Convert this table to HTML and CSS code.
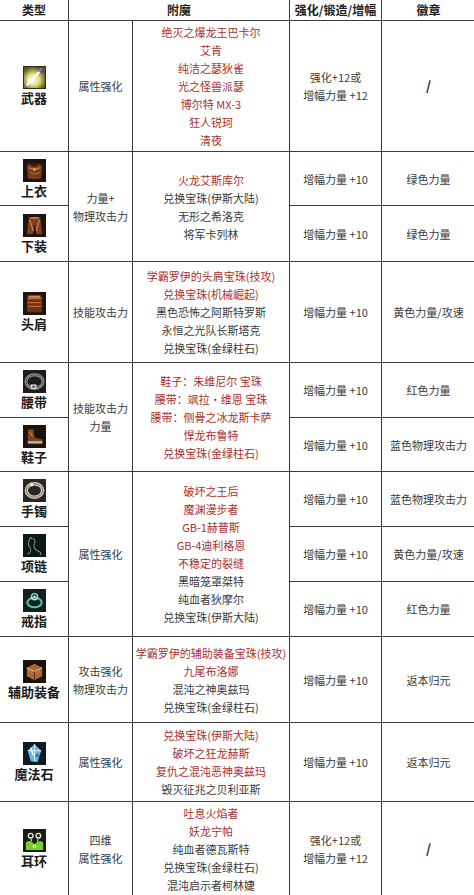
FILE: index.html
```html
<!DOCTYPE html>
<html lang="zh-CN">
<head>
<meta charset="utf-8">
<title>装备附魔表</title>
<link rel="stylesheet" href="styles.css">
</head>
<body>
<table class="gear">
  <colgroup>
    <col class="c1"><col class="c2"><col class="c3"><col class="c4"><col class="c5">
  </colgroup>
  <thead>
    <tr class="h-head">
      <th>类型</th>
      <th colspan="2">附魔</th>
      <th>强化/锻造/增幅</th>
      <th>徽章</th>
    </tr>
  </thead>
  <tbody>
    <tr class="h-weapon">
      <td><div class="type">
        <svg class="icon" viewBox="0 0 24 24"><defs><radialGradient id="gw" cx="0.45" cy="0.6" r="0.6"><stop offset="0" stop-color="#fffbe0"/><stop offset="0.45" stop-color="#e9e08a"/><stop offset="1" stop-color="#5b5a1e"/></radialGradient></defs><rect width="24" height="24" fill="#2b2a14"/><rect x="1" y="1" width="22" height="22" fill="url(#gw)"/><path d="M4 20 L18 5" stroke="#fff" stroke-width="2.2"/><path d="M15 4 L21 2 L19 8 Z" fill="#7a4aa8"/><path d="M16 6 L19 3" stroke="#b58de0" stroke-width="1.2"/><circle cx="8" cy="15" r="3" fill="#fffef2" opacity="0.8"/></svg>
        <span class="label">武器</span></div></td>
      <td>属性强化</td>
      <td class="list">
        <div class="r">绝灭之爆龙王巴卡尔</div>
        <div class="r">艾肯</div>
        <div class="r">纯洁之瑟狄雀</div>
        <div class="r">光之怪兽派瑟</div>
        <div class="r">博尔特 MX-3</div>
        <div class="r">狂人锐珂</div>
        <div class="r">清夜</div>
      </td>
      <td>强化+12或<br>增幅力量 +12</td>
      <td class="slash">/</td>
    </tr>
    <tr class="h-top">
      <td><div class="type">
        <svg class="icon" viewBox="0 0 24 24"><rect width="24" height="24" fill="#1e140d"/><path d="M4 7 Q8 3 12 6 Q16 3 20 7 L19 20 Q12 22 5 20 Z" fill="#7a3d1f"/><path d="M6 9 Q12 12 18 9" stroke="#c07040" stroke-width="1.5" fill="none"/><path d="M7 14 Q12 17 17 14" stroke="#a85a30" stroke-width="1.5" fill="none"/><path d="M8 5 Q12 9 16 5" stroke="#2a1408" stroke-width="1.6" fill="none"/><circle cx="12" cy="11" r="1.5" fill="#e09a60"/></svg>
        <span class="label">上衣</span></div></td>
      <td rowspan="2">力量+<br>物理攻击力</td>
      <td rowspan="2" class="list">
        <div class="r">火龙艾斯库尔</div>
        <div>兑换宝珠(伊斯大陆)</div>
        <div>无形之希洛克</div>
        <div>将军卡列林</div>
      </td>
      <td>增幅力量 +10</td>
      <td>绿色力量</td>
    </tr>
    <tr class="h-bottom">
      <td><div class="type">
        <svg class="icon" viewBox="0 0 24 24"><rect width="24" height="24" fill="#1e140d"/><path d="M6 3 L18 3 L20 21 L14 21 L12 10 L10 21 L4 21 Z" fill="#7f3f1e"/><path d="M7 6 L11 18 M17 6 L14 18" stroke="#c27a45" stroke-width="1.4"/><path d="M8 4 L16 4" stroke="#e0a070" stroke-width="1.2"/></svg>
        <span class="label">下装</span></div></td>
      <td>增幅力量 +10</td>
      <td>绿色力量</td>
    </tr>
    <tr class="h-shoulder">
      <td><div class="type">
        <svg class="icon" viewBox="0 0 24 24"><rect width="24" height="24" fill="#20140c"/><rect x="4" y="3" width="16" height="18" rx="2" fill="#6b3418"/><path d="M5 7 H19 M5 11 H19 M5 15 H19" stroke="#b86a3a" stroke-width="1.3"/><rect x="6" y="4" width="12" height="2" fill="#d68a50"/></svg>
        <span class="label">头肩</span></div></td>
      <td>技能攻击力</td>
      <td class="list">
        <div class="r">学霸罗伊的头肩宝珠(技攻)</div>
        <div class="r">兑换宝珠(机械崛起)</div>
        <div>黑色恐怖之阿斯特罗斯</div>
        <div>永恒之光队长斯塔克</div>
        <div>兑换宝珠(金绿柱石)</div>
      </td>
      <td>增幅力量 +10</td>
      <td>黄色力量/攻速</td>
    </tr>
    <tr class="h-belt">
      <td><div class="type">
        <svg class="icon" viewBox="0 0 24 24"><rect width="24" height="24" fill="#1c1c1c"/><ellipse cx="12" cy="12" rx="9" ry="7" fill="none" stroke="#9a9692" stroke-width="3"/><ellipse cx="12" cy="12" rx="9" ry="7" fill="none" stroke="#4a4644" stroke-width="1"/><rect x="8" y="15" width="6" height="5" fill="#d8d4cc"/><rect x="9.5" y="16.5" width="3" height="2" fill="#555"/></svg>
        <span class="label">腰带</span></div></td>
      <td rowspan="2">技能攻击力<br>力量</td>
      <td rowspan="2" class="list">
        <div class="r">鞋子：朱维尼尔 宝珠</div>
        <div class="r">腰带：飒拉·维恩 宝珠</div>
        <div class="r">腰带：侧骨之冰龙斯卡萨</div>
        <div class="r">悍龙布鲁特</div>
        <div class="r">兑换宝珠(金绿柱石)</div>
      </td>
      <td>增幅力量 +10</td>
      <td>红色力量</td>
    </tr>
    <tr class="h-shoes">
      <td><div class="type">
        <svg class="icon" viewBox="0 0 24 24"><rect width="24" height="24" fill="#1a120c"/><path d="M5 5 L11 4 L12 13 L20 15 Q22 18 19 20 L5 20 Z" fill="#7d4526"/><path d="M5 18 L20 18" stroke="#c8c0b8" stroke-width="2"/><path d="M7 7 L10 12" stroke="#b87a4c" stroke-width="1.5"/></svg>
        <span class="label">鞋子</span></div></td>
      <td>增幅力量 +10</td>
      <td>蓝色物理攻击力</td>
    </tr>
    <tr class="h-bracelet">
      <td><div class="type">
        <svg class="icon" viewBox="0 0 24 24"><rect width="24" height="24" fill="#2a2623"/><ellipse cx="12" cy="12" rx="8.5" ry="7" fill="none" stroke="#d8d2c8" stroke-width="3.5"/><ellipse cx="12" cy="12" rx="8.5" ry="7" fill="none" stroke="#6a625a" stroke-width="1"/><circle cx="9" cy="6" r="1.6" fill="#fff"/></svg>
        <span class="label">手镯</span></div></td>
      <td rowspan="3">属性强化</td>
      <td rowspan="3" class="list">
        <div class="r">破坏之王后</div>
        <div class="r">魔渊漫步者</div>
        <div class="r">GB-1赫普斯</div>
        <div class="r">GB-4迪利格恩</div>
        <div class="r">不稳定的裂缝</div>
        <div>黑暗笼罩桀特</div>
        <div>纯血者狄摩尔</div>
        <div>兑换宝珠(伊斯大陆)</div>
      </td>
      <td>增幅力量 +10</td>
      <td>蓝色物理攻击力</td>
    </tr>
    <tr class="h-necklace">
      <td><div class="type">
        <svg class="icon" viewBox="0 0 24 24"><rect width="24" height="24" fill="#101614"/><path d="M8 4 Q4 10 7 14 Q10 18 5 21 M8 4 Q14 5 12 10 Q10 15 16 18 Q20 20 18 22" stroke="#8fd0c0" stroke-width="1.1" fill="none" stroke-dasharray="1.2 0.6"/></svg>
        <span class="label">项链</span></div></td>
      <td>增幅力量 +10</td>
      <td>黄色力量/攻速</td>
    </tr>
    <tr class="h-ring">
      <td><div class="type">
        <svg class="icon" viewBox="0 0 24 24"><rect width="24" height="24" fill="#12201e"/><ellipse cx="12" cy="14" rx="7.5" ry="5" fill="none" stroke="#5fb8a8" stroke-width="2.2"/><circle cx="12" cy="8" r="3.2" fill="none" stroke="#9ee0d0" stroke-width="1.5"/><circle cx="12" cy="8" r="1.2" fill="#d8fff4"/></svg>
        <span class="label">戒指</span></div></td>
      <td>增幅力量 +10</td>
      <td>红色力量</td>
    </tr>
    <tr class="h-aux">
      <td><div class="type">
        <svg class="icon" viewBox="0 0 24 24"><rect width="24" height="24" fill="#1b120b"/><path d="M4 8 L12 4 L20 8 L20 17 L12 21 L4 17 Z" fill="#a8663a"/><path d="M4 8 L12 12 L20 8" stroke="#e2a56e" stroke-width="1.2" fill="none"/><path d="M12 12 L12 21" stroke="#5e3418" stroke-width="1.2"/><path d="M6 10 L10 15 M14 15 L18 10" stroke="#c98450" stroke-width="1"/></svg>
        <span class="label">辅助装备</span></div></td>
      <td>攻击强化<br>物理攻击力</td>
      <td class="list">
        <div class="r">学霸罗伊的辅助装备宝珠(技攻)</div>
        <div class="r">九尾布洛娜</div>
        <div>混沌之神奥兹玛</div>
        <div>兑换宝珠(金绿柱石)</div>
      </td>
      <td>增幅力量 +10</td>
      <td>返本归元</td>
    </tr>
    <tr class="h-magic">
      <td><div class="type">
        <svg class="icon" viewBox="0 0 24 24"><rect width="24" height="24" fill="#141a22"/><path d="M12 2 L19 9 L15 21 L8 20 L5 9 Z" fill="#6fb6e6"/><path d="M12 2 L12 20 M5 9 L19 9" stroke="#d8f2ff" stroke-width="1"/><path d="M8 6 L11 14" stroke="#ffffff" stroke-width="1.4"/><circle cx="15" cy="14" r="2" fill="#2f7fb8"/></svg>
        <span class="label">魔法石</span></div></td>
      <td>属性强化</td>
      <td class="list">
        <div class="r">兑换宝珠(伊斯大陆)</div>
        <div class="r">破坏之狂龙赫斯</div>
        <div class="r">复仇之混沌恶神奥兹玛</div>
        <div>毁灭征兆之贝利亚斯</div>
      </td>
      <td>增幅力量 +10</td>
      <td>返本归元</td>
    </tr>
    <tr class="h-ear">
      <td><div class="type">
        <svg class="icon" viewBox="0 0 24 24"><rect width="24" height="24" fill="#172010"/><path d="M3 14 Q7 10 12 16 Q17 10 21 14 L21 22 L3 22 Z" fill="#7ccf2a"/><circle cx="8" cy="7" r="2.4" fill="none" stroke="#e8e8e0" stroke-width="1.4"/><circle cx="16" cy="7" r="2.4" fill="none" stroke="#e8e8e0" stroke-width="1.4"/><path d="M8 9.5 L9 13 M16 9.5 L15 13" stroke="#d0d0c8" stroke-width="1.2"/><circle cx="12" cy="18" r="2" fill="#b4f060"/></svg>
        <span class="label">耳环</span></div></td>
      <td>四维<br>属性强化</td>
      <td class="list">
        <div class="r">吐息火焰者</div>
        <div class="r">妖龙宁帕</div>
        <div>纯血者德瓦斯特</div>
        <div>兑换宝珠(金绿柱石)</div>
        <div>混沌启示者柯林婕</div>
      </td>
      <td>强化+12或<br>增幅力量 +12</td>
      <td class="slash">/</td>
    </tr>
  </tbody>
</table>
</body>
</html>
```
FILE: styles.css
```css
html, body {
  margin: 0;
  padding: 0;
  background: #ffffff;
}
body {
  width: 474px;
  height: 895px;
  overflow: hidden;
  font-family: "Noto Sans CJK SC", "Microsoft YaHei", sans-serif;
}
.gear {
  border-collapse: collapse;
  table-layout: fixed;
  width: 476px;
  margin: -1px 0 0 -1px;
}
.c1 { width: 69px; }
.c2 { width: 64px; }
.c3 { width: 157px; }
.c4 { width: 92px; }
.c5 { width: 94px; }

.gear th,
.gear td {
  border: 1px solid #3c3c3c;
  padding: 0;
  text-align: center;
  vertical-align: middle;
  font-size: 11px;
  line-height: 18px;
  color: #3a3a3a;
  font-weight: normal;
}
.gear th {
  font-size: 12px;
  font-weight: bold;
  color: #1e1e1e;
  line-height: 16px;
}
.gear .list {
  white-space: nowrap;
}
.gear .r {
  color: #a8302f;
}
.gear .slash {
  font-size: 13px;
  font-weight: bold;
  color: #222;
}
.type {
  display: flex;
  flex-direction: column;
  align-items: center;
  gap: 1px;
}
.icon {
  width: 23px;
  height: 23px;
  display: block;
}
.label {
  font-size: 13px;
  font-weight: bold;
  color: #1a1a1a;
  line-height: 16px;
}

.h-head { height: 21px; }
.h-weapon { height: 131px; }
.h-top { height: 54px; }
.h-bottom { height: 56px; }
.h-shoulder { height: 101px; }
.h-belt { height: 55px; }
.h-shoes { height: 54px; }
.h-bracelet { height: 55px; }
.h-necklace { height: 55px; }
.h-ring { height: 55px; }
.h-aux { height: 86px; }
.h-magic { height: 79px; }
.h-ear { height: 94px; }
```
